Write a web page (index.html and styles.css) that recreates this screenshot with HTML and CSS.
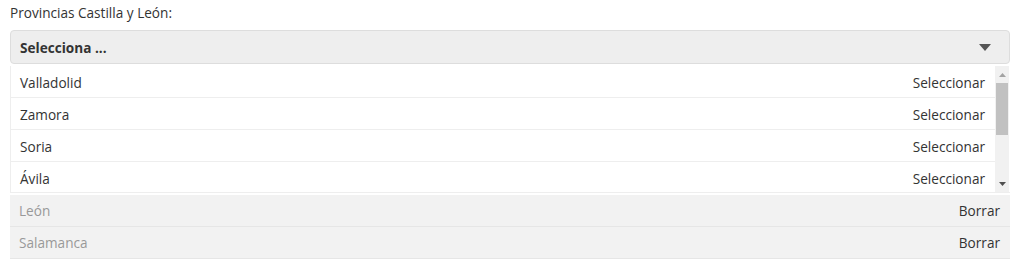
FILE: index.html
```html
<!DOCTYPE html>
<html lang="es">
<head>
<meta charset="utf-8">
<title>Provincias</title>
<link rel="stylesheet" href="styles.css">
</head>
<body>
<div class="field">
  <label class="label">Provincias Castilla y León:</label>
  <div class="select">
    <span class="select-text">Selecciona ...</span>
    <svg class="caret" width="12" height="7" viewBox="0 0 12 7"><path d="M0 0H12L6 7Z" fill="#555"/></svg>
  </div>
  <div class="options">
    <ul class="option-list">
      <li class="row"><span>Valladolid</span><span class="action">Seleccionar</span></li>
      <li class="row"><span>Zamora</span><span class="action">Seleccionar</span></li>
      <li class="row"><span>Soria</span><span class="action">Seleccionar</span></li>
      <li class="row"><span>Ávila</span><span class="action">Seleccionar</span></li>
    </ul>
    <div class="scrollbar">
      <div class="sb-btn"><svg width="7" height="4" viewBox="0 0 7 4"><path d="M0 4H7L3.5 0Z" fill="#a3a3a3"/></svg></div>
      <div class="sb-track"><div class="sb-thumb"></div></div>
      <div class="sb-btn"><svg width="7" height="4" viewBox="0 0 7 4"><path d="M0 0H7L3.5 4Z" fill="#505050"/></svg></div>
    </div>
  </div>
  <ul class="selected">
    <li class="row sel"><span class="name">León</span><span class="action">Borrar</span></li>
    <li class="row sel"><span class="name">Salamanca</span><span class="action">Borrar</span></li>
  </ul>
</div>
</body>
</html>
```
FILE: styles.css
```css
* { box-sizing: border-box; }
html, body { margin: 0; padding: 0; background: #fff; }
body {
  font-family: "Open Sans", "Noto Sans", sans-serif;
  font-size: 13.6px;
  color: #333;
}
.field {
  padding: 4px 14px 0 10px;
  display: flex;
  flex-direction: column;
}
.label {
  display: block;
  height: 26px;
  line-height: 18px;
}
.select {
  height: 34px;
  background: #eee;
  border: 1px solid #ddd;
  border-radius: 4px;
  display: flex;
  align-items: center;
  justify-content: space-between;
  padding: 0 18px 0 9px;
}
.select-text { font-weight: bold; }
.caret { display: block; }
.options {
  margin-top: 2px;
  height: 127px;
  display: flex;
  border-left: 1px solid #eee;
  border-bottom: 1px solid #eee;
}
.option-list, .selected {
  list-style: none;
  margin: 0;
  padding: 0;
}
.option-list { flex: 1; min-width: 0; }
.option-list .row { padding-top: 2px; }
.scrollbar {
  width: 14px;
  background: #f1f1f1;
  display: flex;
  flex-direction: column;
  margin-right: 1px;
}
.sb-btn {
  height: 17px;
  display: flex;
  align-items: center;
  justify-content: center;
}
.sb-btn svg { display: block; }
.sb-track { flex: 1; padding: 0 1px; }
.sb-thumb { height: 52px; background: #c1c1c1; }
.row {
  height: 32px;
  display: flex;
  align-items: center;
  justify-content: space-between;
  padding: 0 10px 0 9px;
  border-bottom: 1px solid #eee;
}
.option-list .row:last-child { border-bottom: none; height: 31px; }
.selected { margin-top: 2px; }
.row.sel {
  background: #f2f2f2;
  border-bottom: 1px solid #e6e6e6;
}
.row.sel .name { color: #999; }
.row.sel .action { color: #333; }
```
